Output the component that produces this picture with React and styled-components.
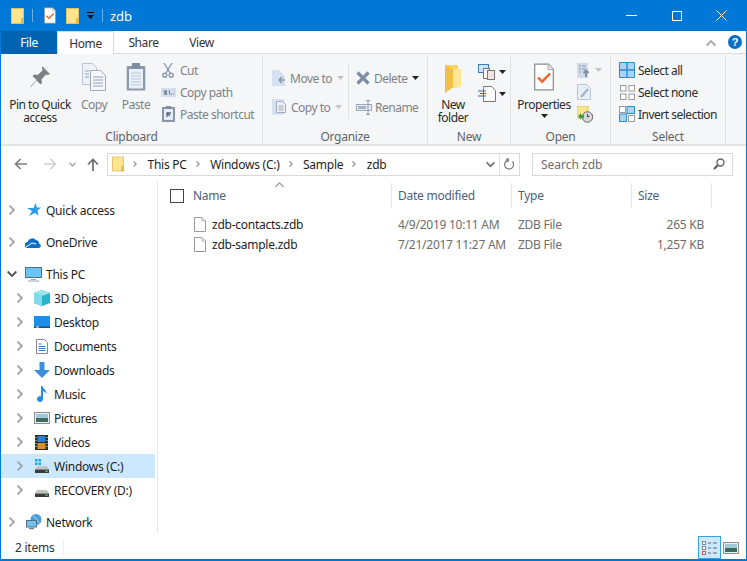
import React from 'react'
import styled, { createGlobalStyle } from 'styled-components'

const GlobalStyle = createGlobalStyle`
  html, body { margin: 0; padding: 0; background: #fff; }
  body { font-family: "Noto Sans", "Open Sans", "Liberation Sans", sans-serif; font-size: 12px; letter-spacing: -0.25px; color: #1e1e1e; }
  * { box-sizing: border-box; }
  svg { display: block; flex: none; }
`

const Win = styled.div`
  width: 747px; height: 561px; display: flex; flex-direction: column; overflow: hidden;
  border: 1px solid #0078d7; border-top: 0; border-bottom-width: 2px; background: #fff;
`
const TitleBar = styled.div`
  height: 31px; background: #0078d7; color: #fff; display: flex; align-items: center; padding: 0 3px 0 11px; flex: none; margin: 0 -1px;
`
const TitleSep = styled.span`
  width: 1px; height: 13px; background: #6cb0e6; margin: 0 ${p => p.$r}px 0 ${p => p.$l}px;
`
const TitleText = styled.span` font-size: 13px; letter-spacing: 0; flex: 1; `
const WinBtn = styled.div` width: 45px; height: 31px; display: flex; align-items: center; justify-content: center; `

const TabRow = styled.div`
  height: 23px; flex: none; display: flex; align-items: stretch; position: relative; background: #fff;
  box-shadow: inset 0 -1px 0 #dadbdc; padding-right: 4px;
`
const Tab = styled.div`
  display: flex; align-items: center; justify-content: center; width: ${p => p.$w}px; font-size: 12px; color: #333; letter-spacing: -0.4px;
  ${p => p.$file && 'background:#0063b1;color:#fff;'}
  ${p => p.$active && 'border:1px solid #dadbdc;border-bottom:0;background:#fff;'}
`
const TabEnd = styled.div` margin-left: auto; display: flex; align-items: center; gap: 12px; `
const HelpDot = styled.div`
  width: 14px; height: 14px; border-radius: 50%; background: #0a6fc4; color: #fff; font: bold 11px "Liberation Sans", sans-serif;
  display: flex; align-items: center; justify-content: center; letter-spacing: 0; margin-bottom: 1px;
`

const Ribbon = styled.div`
  height: 92px; flex: none; display: flex; background: #f5f6f7; border-bottom: 2px solid #e3e4e5; letter-spacing: -0.5px;
`
const Group = styled.div`
  width: ${p => p.$w}px; display: flex; flex-direction: column; border-right: 1px solid #dfe0e1; margin-top: 2px;
`
const GroupBody = styled.div` flex: 1; display: flex; align-items: flex-start; padding-left: ${p => p.$pl || 0}px; `
const GroupLabel = styled.div` height: 15px; line-height: 16px; text-align: center; color: #5f6368; font-size: 12px; letter-spacing: -0.25px; `
const LargeBtn = styled.div`
  width: ${p => p.$w}px; display: flex; flex-direction: column; align-items: center; padding-top: 7px;
  color: ${p => p.$off ? '#7d8288' : '#2b2b2b'}; text-align: center; line-height: 13px;
`
const LargeIcon = styled.div` height: 34px; display: flex; align-items: flex-start; justify-content: center; margin-bottom: 1px; `
const CaretSlot = styled.div` margin-top: 3px; `
const Stack = styled.div`
  display: flex; flex-direction: column; padding-top: ${p => p.$pt}px; gap: ${p => p.$gap}px; margin-left: ${p => p.$ml || 0}px; width: ${p => p.$w ? p.$w + 'px' : 'auto'};
  ${p => p.$sep && 'border-right:1px solid #dfe0e1;height:55px;margin-top:8px;'}
`
const SmallBtn = styled.div`
  display: flex; align-items: center; height: ${p => p.$h || 16}px; gap: ${p => p.$gap || 5}px; white-space: nowrap;
  color: ${p => p.$off ? '#7d8288' : '#2b2b2b'};
`
const IconSlot = styled.div` width: ${p => p.$w || 14}px; display: flex; justify-content: center; flex: none; `

const NavBar = styled.div` height: 35px; flex: none; display: flex; align-items: center; padding: 3px 13px 2px 13px; `
const NavArrows = styled.div` width: 93px; display: flex; align-items: center; `
const AddressBox = styled.div`
  width: 413px; height: 23px; border: 1px solid #d9d9d9; display: flex; align-items: center; padding-left: 4px; color: #1e1e1e;
`
const CrumbSep = styled.span` margin: 0 9.5px 0 8px; `
const AddressEnd = styled.div` margin-left: auto; display: flex; align-items: center; height: 100%; `
const AddressSep = styled.div` width: 1px; height: 21px; background: #e3e3e3; margin: 0 3px 0 4px; `
const SearchBox = styled.div`
  width: 201px; height: 23px; margin-left: 12px; border: 1px solid #d9d9d9; display: flex; align-items: center; justify-content: space-between;
  padding: 0 7px 0 8px; color: #6d6d6d; letter-spacing: 0;
`

const Body = styled.div` flex: 1; display: flex; min-height: 0; `
const Sidebar = styled.div` width: 157px; flex: none; border-right: 1px solid #e8e8e8; padding-top: 17px; margin-bottom: 2px; `
const TreeRow = styled.div`
  height: 24px; width: 154px; display: flex; align-items: center; padding-left: ${p => p.$child ? 15 : 7}px;
  margin-top: ${p => p.$gap || 0}px; background: ${p => p.$sel ? '#cce8ff' : 'transparent'}; color: #1e1e1e;
`
const Chevron = styled.div` width: 8px; margin-right: 9px; display: flex; justify-content: center; `
const TreeIcon = styled.div` width: 17px; margin-right: 4px; display: flex; justify-content: center; `

const Main = styled.div` flex: 1; display: flex; flex-direction: column; padding-top: 2px; `
const HeadRow = styled.div`
  height: 25px; display: grid; grid-template-columns: 35px 199px 120px 120px 80px; position: relative; color: #4c607a;
`
const CheckCell = styled.div` display: flex; align-items: center; padding: 0 0 0 12px; `
const CheckBox = styled.div` width: 14px; height: 14px; border: 1px solid #444; background: #fff; `
const HeadCell = styled.div` display: flex; align-items: center; padding-left: ${p => p.$first ? 0 : 6}px; border-right: 1px solid #e5e5e5; `
const SortCaret = styled.div` position: absolute; left: 117px; top: -3px; `
const FileList = styled.div` padding-top: 6px; `
const FileRow = styled.div`
  height: 20px; display: grid; grid-template-columns: 35px 199px 120px 120px 72px; align-items: center; color: #6d6d6d;
`
const FileName = styled.div` grid-column: 2; display: flex; align-items: center; gap: 6px; color: #1e1e1e; padding-left: 1px; `
const Cell = styled.div` padding-left: 6px; ${p => p.$right && 'text-align:right;padding:0;'} `

const StatusBar = styled.div` height: 24px; flex: none; display: flex; align-items: center; padding: 0 8px 0 14px; color: #333; `
const StatusSep = styled.div` width: 1px; height: 16px; background: #eee; margin-left: 9px; `
const ViewBtns = styled.div` margin-left: auto; display: flex; align-items: flex-end; gap: 2px; align-self: flex-end; `
const ViewBtn = styled.div`
  width: ${p => p.$w}px; height: 23px; display: flex; align-items: center; justify-content: center;
  ${p => p.$on && 'background:#cce8ff;border:1px solid #3a9fdc;'}
`

/* icons */
const Folder = ({ w = 13, h = 16 }) => (
  <svg width={w} height={h} viewBox="0 0 13 16">
    <rect x=".5" y=".5" width="12" height="15" fill="#ffe68e" stroke="#e3c163" />
    <path d="M10 10h3v6h-3z" fill="#e8b93f" />
  </svg>
)
const PropsDoc = ({ w = 12, h = 17 }) => (
  <svg width={w} height={h} viewBox="0 0 20 27">
    <path d="M.7.7h13.6l5 5v20.6H.7z" fill="#fff" stroke="#8a8a8a" strokeWidth="1.2" />
    <path d="M14 .7v5.3h5.3" fill="#e8e8e8" stroke="#aaa" />
    <path d="M4 14l4.2 4.2L16 10" fill="none" stroke="#f0622a" strokeWidth="2.4" />
  </svg>
)
const Caret = ({ c = '#222' }) => (
  <svg width="7" height="4" viewBox="0 0 7 4"><path d="M0 0h7L3.5 4z" fill={c} /></svg>
)
const QatCaret = () => (
  <svg width="7" height="7" viewBox="0 0 7 7"><path d="M0 0h7v1H0zM0 3h7L3.5 7z" fill="#111" /></svg>
)
const Pin = () => (
  <svg width="22" height="24" viewBox="0 0 22 24" style={{ marginTop: 2 }}>
    <path d="M13 1l8 8-2 1-2-.5-4.5 5 .5 3.5-1.500 1.500-4-4L2 22l-.5-.5 6-6.500-4-4L5 9.500l3.500.5 5-4.500L13 3z" fill="#7d8185" />
  </svg>
)
const CopyIcon = () => (
  <svg width="24" height="28" viewBox="0 0 24 28">
    <path d="M.5.5h10l4 4v17H.5z" fill="#eef2f8" stroke="#b9c4d4" />
    <path d="M8.500 7.500h10l5 5v15h-15z" fill="#f6f8fb" stroke="#9daabb" />
    <path d="M11 14h10M11 17h10M11 20h10M11 23h10M3 8h4M3 11h4M3 14h4" stroke="#8fa0b8" />
  </svg>
)
const PasteIcon = () => (
  <svg width="20" height="28" viewBox="0 0 20 28">
    <rect x=".7" y="3" width="18.600" height="24.500" rx="1" fill="#8a97a9" />
    <rect x="3" y="6" width="14" height="19.500" fill="#eaf0f8" />
    <rect x="6" y="0" width="8" height="5" fill="#7f8ca0" />
    <path d="M5 10h10M5 13h10M5 16h10M5 19h10M5 22h10" stroke="#bcc9dc" />
  </svg>
)
const Scissors = () => (
  <svg width="12" height="15" viewBox="0 0 12 15" fill="none" stroke="#8a97a9" strokeWidth="1.400">
    <path d="M2 0l6 10M10 0L4 10" />
    <circle cx="2.800" cy="12.300" r="2" /><circle cx="9.200" cy="12.300" r="2" />
  </svg>
)
const CopyPath = () => (
  <svg width="15" height="9" viewBox="0 0 15 9">
    <rect width="15" height="9" fill="#d3deee" />
    <path d="M3 2l1 5 1-5 1 5M8 2l1 5M10 6h1M12 6h1" stroke="#5c6d86" strokeWidth=".8" fill="none" />
  </svg>
)
const PasteShortcut = () => (
  <svg width="13" height="16" viewBox="0 0 13 16">
    <rect y="1" width="13" height="15" fill="#8a97a9" />
    <rect x="2" y="3" width="9" height="11" fill="#e6edf6" />
    <rect x="4" width="5" height="3" fill="#7f8ca0" />
    <path d="M5 11V7h4M5 7l3 3" stroke="#56657a" strokeWidth="1.300" fill="none" />
  </svg>
)
const MoveTo = () => (
  <svg width="13" height="16" viewBox="0 0 13 16">
    <path d="M0 0h7l6 6v10H0z" fill="#d6e0ef" />
    <path d="M13 10H7M7 10l3-3M7 10l3 3" stroke="#8c99ac" strokeWidth="1.600" fill="none" />
  </svg>
)
const CopyTo = () => (
  <svg width="14" height="16" viewBox="0 0 14 16">
    <rect width="12" height="16" fill="#d6e0ef" />
    <path d="M4.500 2.500h6l3 3v8h-9z" fill="#eef2f8" stroke="#9daabb" />
    <path d="M6.500 7h5M6.500 9h5M6.500 11h5" stroke="#9daabb" />
  </svg>
)
const DeleteX = () => (
  <svg width="14" height="14" viewBox="0 0 14 14"><path d="M1.500 1.500l11 11M12.500 1.500l-11 11" stroke="#7e8da5" strokeWidth="3.200" /></svg>
)
const Rename = () => (
  <svg width="16" height="15" viewBox="0 0 16 15">
    <rect x=".5" y="4.500" width="15" height="6" fill="#e3e9f2" stroke="#9daabb" />
    <rect x="2" y="6" width="8" height="3" fill="#a6b4c8" />
    <path d="M12 1v13M10 .5h4M10 14.500h4" stroke="#8c99ac" />
  </svg>
)
const NewFolder = () => (
  <svg width="20" height="28" viewBox="0 0 20 28" style={{ marginTop: 2 }}>
    <path d="M2 0h13v5h3v17l-9 1-7 5z" fill="#fcd568" />
    <path d="M2 0l8 4v18l-8 6z" fill="#f2c044" />
    <path d="M10 4h8v18h-8z" fill="#ffe596" />
  </svg>
)
const NewItem = () => (
  <svg width="18" height="16" viewBox="0 0 18 16">
    <rect x=".5" y=".5" width="10" height="8" fill="#cfe4f7" stroke="#3a7db5" />
    <rect x="5.500" y="4.500" width="6" height="10" fill="#fff" stroke="#777" />
    <rect x="9.500" y="6.500" width="7" height="9" fill="#f4e3e3" stroke="#777" />
  </svg>
)
const EasyAccess = () => (
  <svg width="18" height="16" viewBox="0 0 18 16">
    <path d="M5.500.5h8l4 4v11h-12z" fill="#fff" stroke="#777" />
    <path d="M0 5h8M2 7.500h6M0 10h8" stroke="#2a6ca8" strokeWidth="1.200" />
  </svg>
)
const OpenList = () => (
  <svg width="14" height="15" viewBox="0 0 14 15">
    <rect width="11" height="15" fill="#cfdbea" />
    <path d="M2 3h2M5 3h4M2 6h2M5 6h4M2 9h2" stroke="#8798b0" />
    <path d="M9 14V8M6.500 10L9 7.500l2.500 2.500" stroke="#7f90a8" strokeWidth="2" fill="none" />
  </svg>
)
const EditDoc = () => (
  <svg width="14" height="16" viewBox="0 0 14 16">
    <path d="M.5.5h9l4 4v11H.5z" fill="#e9eff7" stroke="#b6c3d6" />
    <path d="M4 13l7-8" stroke="#9fb1c9" strokeWidth="2" />
  </svg>
)
const History = () => (
  <svg width="16" height="17" viewBox="0 0 16 17">
    <rect width="11" height="12" fill="#fde58a" stroke="#dfc35c" />
    <circle cx="10.500" cy="11" r="5.200" fill="#d8d8d8" stroke="#666" />
    <path d="M10.500 8v3l2-1" stroke="#444" fill="none" />
    <path d="M1 10l3-3v2h3v3H4v2z" fill="#3f9d3a" />
  </svg>
)
const SelectAll = () => (
  <svg width="16" height="16" viewBox="0 0 16 16">
    <path d="M.5.5h15v15H.5z" fill="#a9d3f2" stroke="#2e8bd0" />
    <path d="M8 0v16M0 8h16" stroke="#2e8bd0" strokeWidth="1.400" />
  </svg>
)
const SelectNone = () => (
  <svg width="15" height="15" viewBox="0 0 15 15" fill="#fff" stroke="#9a9a9a">
    <rect x=".5" y=".5" width="5.500" height="5.500" /><rect x="9" y=".5" width="5.500" height="5.500" />
    <rect x=".5" y="9" width="5.500" height="5.500" /><rect x="9" y="9" width="5.500" height="5.500" />
  </svg>
)
const Invert = () => (
  <svg width="16" height="16" viewBox="0 0 16 16">
    <rect x=".5" y=".5" width="6" height="6" fill="#fff" stroke="#9a9a9a" />
    <rect x="8" y=".5" width="7.500" height="7" fill="#a9d3f2" stroke="#2e8bd0" />
    <rect x=".5" y="8" width="7" height="7.500" fill="#a9d3f2" stroke="#2e8bd0" />
    <rect x="9.500" y="9.500" width="6" height="6" fill="#fff" stroke="#9a9a9a" />
  </svg>
)
const NavArrow = ({ dir, c }) => (
  <svg width="13" height="12" viewBox="0 0 13 12" style={dir === 'r' ? { transform: 'scaleX(-1)' } : undefined}>
    <path d="M13 6H1.500M6.500 1l-5 5 5 5" fill="none" stroke={c} strokeWidth="1.700" />
  </svg>
)
const UpArrow = () => (
  <svg width="12" height="13" viewBox="0 0 12 13"><path d="M6 13V1.500M1 6.500l5-5 5 5" fill="none" stroke="#6b6b6b" strokeWidth="1.700" /></svg>
)
const Chev = ({ size = 8, c = '#a6a6a6', dir = 'r', sw = 1.5 }) => (
  <svg width={size} height={size} viewBox="0 0 8 8" style={dir === 'd' ? { transform: 'rotate(90deg)' } : dir === 'u' ? { transform: 'rotate(-90deg)' } : undefined}>
    <path d="M2 .5L5.500 4 2 7.500" fill="none" stroke={c} strokeWidth={sw} />
  </svg>
)
const Refresh = () => (
  <svg width="11" height="12" viewBox="0 0 11 12"><path d="M9.500 3.500a4.500 4.500 0 1 1-3-1.500H4M5.500 0L3.500 2l2 2" fill="none" stroke="#777" strokeWidth="1.200" /></svg>
)
const Search = () => (
  <svg width="12" height="12" viewBox="0 0 12 12"><circle cx="7.500" cy="4.500" r="3.500" fill="none" stroke="#666" strokeWidth="1.400" /><path d="M5 7l-4 4" stroke="#555" strokeWidth="2" /></svg>
)
const Star = () => (
  <svg width="14" height="14" viewBox="0 0 14 14"><path d="M8.500 0l1.300 4.500H14l-3.500 3 1 5-3.500-2.500L2 13l3-5L0 5h6.500z" fill="#2f9be6" /></svg>
)
const Cloud = () => (
  <svg width="17" height="11" viewBox="0 0 17 11"><path d="M3 11a3 3 0 0 1-.5-6A5 5 0 0 1 11 3a3.500 3.500 0 0 1 3 3.500 2.300 2.300 0 0 1 0 4.500z" fill="#0f6fc6" /><path d="M1 10l6-4 4 1" stroke="#fff" fill="none" /></svg>
)
const Monitor = () => (
  <svg width="17" height="15" viewBox="0 0 17 15">
    <rect x=".5" y=".5" width="16" height="10" fill="#6cc4f5" stroke="#5a6f80" />
    <path d="M6 12h5v1H6zM3 13.500h11v1H3z" fill="#9aa7b2" />
  </svg>
)
const Cube = () => (
  <svg width="16" height="16" viewBox="0 0 16 16">
    <path d="M8 0l8 3v10l-8 3-8-3V3z" fill="#27b3c8" />
    <path d="M8 6L0 3l8-3 8 3z" fill="#9be4ee" />
    <path d="M0 3l8 3v10l-8-3z" fill="#7edce8" />
  </svg>
)
const DesktopIcon = () => (
  <svg width="16" height="12" viewBox="0 0 16 12">
    <rect width="16" height="12" fill="#1c8fe6" /><path d="M0 10.500h16V12H0z" fill="#2b4a66" /><path d="M2 11h3" stroke="#fff" />
  </svg>
)
const DocIcon = () => (
  <svg width="12" height="15" viewBox="0 0 12 15">
    <path d="M.5.500h8l3 3v11H.5z" fill="#fff" stroke="#888" />
    <path d="M2.500 5h3M2.500 7.500h7M2.500 9.500h7M2.500 11.500h7" stroke="#3d7bb8" />
  </svg>
)
const DownIcon = () => (
  <svg width="16" height="16" viewBox="0 0 16 16"><path d="M5.500 0h5v8H16l-8 8-8-8h5.500z" fill="#3a8fdc" /></svg>
)
const Note = () => (
  <svg width="10" height="16" viewBox="0 0 10 16"><path d="M4 0h1.500c.5 3 4.500 4 4 8C8.500 6 7 5.500 6 5v8a3 3 0 1 1-2-2.800z" fill="#1e8fe6" /></svg>
)
const PicIcon = () => (
  <svg width="16" height="12" viewBox="0 0 16 12">
    <rect x=".5" y=".5" width="15" height="11" fill="#e8eff2" stroke="#8f8f8f" />
    <rect x="2" y="2" width="12" height="4" fill="#9fc9d9" /><rect x="2" y="6" width="12" height="4" fill="#3f6b5a" />
  </svg>
)
const VideoIcon = () => (
  <svg width="13" height="15" viewBox="0 0 13 15">
    <rect width="13" height="15" fill="#2d2d2d" /><rect x="2.500" y="1" width="8" height="6" fill="#2c7ed0" /><rect x="2.500" y="8" width="8" height="6" fill="#d8912c" />
    <path d="M1 2v1M1 5v1M1 8v1M1 11v1M12 2v1M12 5v1M12 8v1M12 11v1" stroke="#ddd" />
  </svg>
)
const Drive = ({ win }) => (
  <svg width="14" height="14" viewBox="0 0 14 14">
    {win && <path d="M0 0h2.500v2.500H0zM3.500 0H6v2.500H3.500zM0 3.500h2.500V6H0zM3.500 3.500H6V6H3.500z" fill="#19a5e8" />}
    <path d="M2 7h10l2 3.500H0z" fill="#c2c2c2" /><rect y="10.500" width="14" height="3.500" fill="#3c3c3c" /><rect x="10.500" y="11.500" width="2" height="1.500" fill="#5fd65f" />
  </svg>
)
const NetIcon = () => (
  <svg width="16" height="16" viewBox="0 0 16 16">
    <circle cx="10" cy="5.500" r="5.500" fill="#4a9ddb" /><path d="M7 2c2 1 4 3 6 7" stroke="#bfe0f5" fill="none" />
    <rect x=".5" y="6.500" width="10" height="6.500" fill="#6cc4f5" stroke="#5a6f80" /><path d="M3 14.500h5" stroke="#6f8090" strokeWidth="1.500" />
  </svg>
)
const FileIcon = () => (
  <svg width="12" height="15" viewBox="0 0 12 15"><path d="M.5.500h7.500l3.500 3.500v10.500H.5z" fill="#fdfdfd" stroke="#9a9a9a" /><path d="M8 .5v3.500h3.500" fill="none" stroke="#bbb" /></svg>
)
const DetailsView = () => (
  <svg width="16" height="14" viewBox="0 0 16 14">
    <rect x=".5" y=".5" width="3" height="3" fill="#fff" stroke="#888" /><rect x=".5" y="5.500" width="3" height="3" fill="#fff" stroke="#888" /><rect x=".5" y="10.500" width="3" height="3" fill="#fff" stroke="#c55" />
    <path d="M6 2h3M11 2h4M6 7h3M11 7h4M6 12h3M11 12h4" stroke="#666" />
  </svg>
)

const tree = [
  { label: 'Quick access', Icon: Star },
  { label: 'OneDrive', Icon: Cloud, gap: 8 },
  { label: 'This PC', Icon: Monitor, gap: 8, open: true },
  { label: '3D Objects', Icon: Cube, child: true },
  { label: 'Desktop', Icon: DesktopIcon, child: true },
  { label: 'Documents', Icon: DocIcon, child: true },
  { label: 'Downloads', Icon: DownIcon, child: true },
  { label: 'Music', Icon: Note, child: true },
  { label: 'Pictures', Icon: PicIcon, child: true },
  { label: 'Videos', Icon: VideoIcon, child: true },
  { label: 'Windows (C:)', Icon: () => <Drive win />, child: true, sel: true },
  { label: 'RECOVERY (D:)', Icon: () => <Drive />, child: true },
  { label: 'Network', Icon: NetIcon, gap: 8 },
]

const crumbs = ['This PC', 'Windows (C:)', 'Sample', 'zdb']

const files = [
  { name: 'zdb-contacts.zdb', date: '4/9/2019 10:11 AM', size: '265 KB' },
  { name: 'zdb-sample.zdb', date: '7/21/2017 11:27 AM', size: '1,257 KB' },
]

export default function App() {
  return (
    <Win>
      <GlobalStyle />
      <TitleBar>
        <Folder />
        <TitleSep $l={8} $r={11} />
        <PropsDoc />
        <IconSlot $w={10} />
        <Folder />
        <IconSlot $w={8} />
        <QatCaret />
        <TitleSep $l={8} $r={7} />
        <TitleText>zdb</TitleText>
        <WinBtn><svg width="11" height="1"><rect width="11" height="1" fill="#fff" /></svg></WinBtn>
        <WinBtn><svg width="10" height="10"><rect x=".5" y=".5" width="9" height="9" fill="none" stroke="#fff" /></svg></WinBtn>
        <WinBtn><svg width="11" height="11"><path d="M.5.5l10 10M10.500.5l-10 10" stroke="#fff" /></svg></WinBtn>
      </TitleBar>
      <TabRow>
        <Tab $file $w={56}>File</Tab>
        <Tab $active $w={57}>Home</Tab>
        <Tab $w={59}>Share</Tab>
        <Tab $w={57}>View</Tab>
        <TabEnd>
          <Chev dir="u" size={10} c="#a8a8a8" />
          <HelpDot>?</HelpDot>
        </TabEnd>
      </TabRow>
      <Ribbon>
        <Group $w={262}>
          <GroupBody $pl={3}>
            <LargeBtn $w={72}><LargeIcon><Pin /></LargeIcon>Pin to Quick<br />access</LargeBtn>
            <LargeBtn $w={36} $off><LargeIcon><CopyIcon /></LargeIcon>Copy</LargeBtn>
            <LargeBtn $w={48} $off><LargeIcon><PasteIcon /></LargeIcon>Paste</LargeBtn>
            <Stack $pt={6} $gap={6} $ml={1}>
              <SmallBtn $off><IconSlot><Scissors /></IconSlot>Cut</SmallBtn>
              <SmallBtn $off><IconSlot><CopyPath /></IconSlot>Copy path</SmallBtn>
              <SmallBtn $off><IconSlot><PasteShortcut /></IconSlot>Paste shortcut</SmallBtn>
            </Stack>
          </GroupBody>
          <GroupLabel>Clipboard</GroupLabel>
        </Group>
        <Group $w={165}>
          <GroupBody $pl={9}>
            <Stack $pt={6} $gap={13} $w={77} $sep>
              <SmallBtn $off><MoveTo />Move to <Caret c="#c4c4c4" /></SmallBtn>
              <SmallBtn $off><CopyTo />Copy to <Caret c="#c4c4c4" /></SmallBtn>
            </Stack>
            <Stack $pt={14} $gap={13} $ml={7}>
              <SmallBtn $off $gap={4}><DeleteX />Delete <Caret /></SmallBtn>
              <SmallBtn $off $gap={3}><Rename />Rename</SmallBtn>
            </Stack>
          </GroupBody>
          <GroupLabel>Organize</GroupLabel>
        </Group>
        <Group $w={83}>
          <GroupBody>
            <LargeBtn $w={50}><LargeIcon><NewFolder /></LargeIcon>New<br />folder</LargeBtn>
            <Stack $pt={7} $gap={5}>
              <SmallBtn $h={17} $gap={3}><NewItem /><Caret /></SmallBtn>
              <SmallBtn $h={17} $gap={3}><EasyAccess /><Caret /></SmallBtn>
            </Stack>
          </GroupBody>
          <GroupLabel>New</GroupLabel>
        </Group>
        <Group $w={100}>
          <GroupBody>
            <LargeBtn $w={66}><LargeIcon><PropsDoc w={20} h={28} /></LargeIcon>Properties<CaretSlot><Caret /></CaretSlot></LargeBtn>
            <Stack $pt={6} $gap={6}>
              <SmallBtn $gap={4}><OpenList /><Caret c="#c4c4c4" /></SmallBtn>
              <SmallBtn><EditDoc /></SmallBtn>
              <SmallBtn><History /></SmallBtn>
            </Stack>
          </GroupBody>
          <GroupLabel>Open</GroupLabel>
        </Group>
        <Group $w={115}>
          <GroupBody $pl={8}>
            <Stack $pt={6} $gap={6}>
              <SmallBtn $gap={3}><IconSlot $w={16}><SelectAll /></IconSlot>Select all</SmallBtn>
              <SmallBtn $gap={3}><IconSlot $w={16}><SelectNone /></IconSlot>Select none</SmallBtn>
              <SmallBtn $gap={3}><IconSlot $w={16}><Invert /></IconSlot>Invert selection</SmallBtn>
            </Stack>
          </GroupBody>
          <GroupLabel>Select</GroupLabel>
        </Group>
      </Ribbon>
      <NavBar>
        <NavArrows>
          <NavArrow c="#7f7f7f" />
          <IconSlot $w={17} />
          <NavArrow dir="r" c="#cfcfcf" />
          <IconSlot $w={12} />
          <Chev dir="d" size={7} c="#a0a0a0" />
          <IconSlot $w={11} />
          <UpArrow />
        </NavArrows>
        <AddressBox>
          <Folder w={12} h={16} />
          {crumbs.map(c => (
            <React.Fragment key={c}>
              <CrumbSep><Chev size={6} c="#888" /></CrumbSep>
              {c}
            </React.Fragment>
          ))}
          <AddressEnd>
            <Chev dir="d" size={9} c="#777" />
            <AddressSep />
            <Refresh />
            <IconSlot $w={5} />
          </AddressEnd>
        </AddressBox>
        <SearchBox>Search zdb<Search /></SearchBox>
      </NavBar>
      <Body>
        <Sidebar>
          {tree.map(({ label, Icon, child, sel, gap, open }) => (
            <TreeRow key={label} $child={child} $sel={sel} $gap={gap}>
              <Chevron>
                {open ? <Chev dir="d" size={10} c="#555" /> : <Chev size={10} c="#a6a6a6" />}
              </Chevron>
              <TreeIcon><Icon /></TreeIcon>
              {label}
            </TreeRow>
          ))}
        </Sidebar>
        <Main>
          <HeadRow>
            <CheckCell><CheckBox /></CheckCell>
            <HeadCell $first>Name</HeadCell>
            <HeadCell>Date modified</HeadCell>
            <HeadCell>Type</HeadCell>
            <HeadCell>Size</HeadCell>
            <SortCaret><Chev dir="u" size={9} c="#999" sw={1} /></SortCaret>
          </HeadRow>
          <FileList>
            {files.map(f => (
              <FileRow key={f.name}>
                <FileName><FileIcon />{f.name}</FileName>
                <Cell>{f.date}</Cell>
                <Cell>ZDB File</Cell>
                <Cell $right>{f.size}</Cell>
              </FileRow>
            ))}
          </FileList>
        </Main>
      </Body>
      <StatusBar>
        2 items
        <StatusSep />
        <ViewBtns>
          <ViewBtn $on $w={23}><DetailsView /></ViewBtn>
          <ViewBtn $w={15}><PicIcon /></ViewBtn>
        </ViewBtns>
      </StatusBar>
    </Win>
  )
}
